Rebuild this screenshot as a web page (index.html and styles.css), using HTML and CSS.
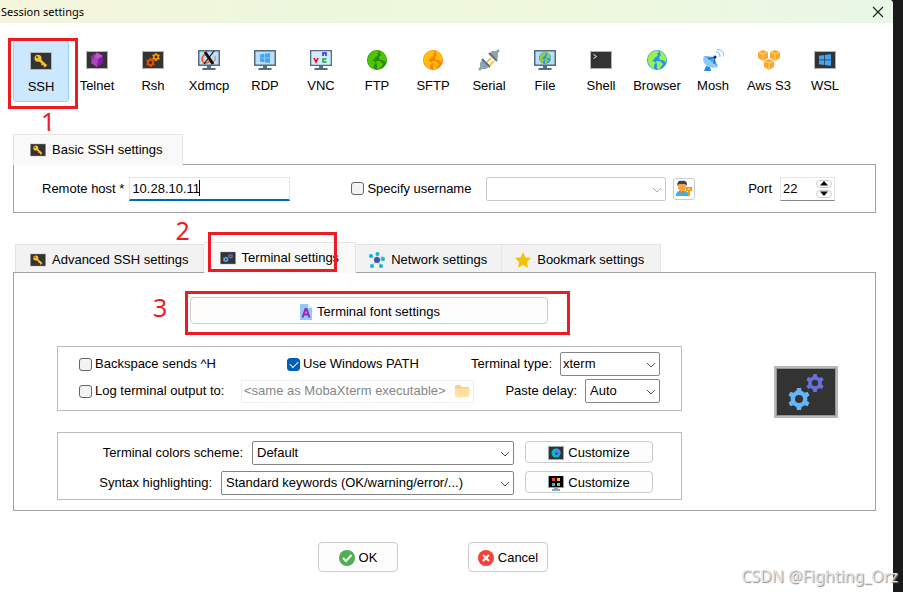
FILE: index.html
```html
<!DOCTYPE html>
<html lang="en">
<head>
<meta charset="utf-8">
<title>Session settings</title>
<link rel="stylesheet" href="styles.css">
</head>
<body>
<svg class="defs" aria-hidden="true">
  <symbol id="frame" viewBox="0 0 22 18">
    <rect width="22" height="18" fill="#b4b4b4"/><rect x="1" y="1" width="20" height="16" fill="#333"/>
  </symbol>
  <symbol id="key" viewBox="0 0 22 18">
    <use href="#frame"/>
    <path d="M8 6.500 16 14" stroke="#fbc02d" stroke-width="2.600"/>
    <path d="M11.600 13 14 10.800M14 15 16.400 12.800" stroke="#fbc02d" stroke-width="1.400"/>
    <circle cx="8" cy="6.300" r="3.500" fill="#fbc02d"/><circle cx="7" cy="5.300" r="1" fill="#333"/>
  </symbol>
  <symbol id="gear" viewBox="0 0 22 22">
    <circle cx="11" cy="11" r="6.200" fill="none" stroke="currentColor" stroke-width="4.400"/>
    <path d="M9 0h4l1 5H8zM9 22h4l1-5H8z" fill="currentColor"/>
    <path d="M9 0h4l1 5H8zM9 22h4l1-5H8z" fill="currentColor" transform="rotate(60 11 11)"/>
    <path d="M9 0h4l1 5H8zM9 22h4l1-5H8z" fill="currentColor" transform="rotate(120 11 11)"/>
  </symbol>
  <symbol id="blue-gears" viewBox="0 0 22 18">
    <use href="#frame"/>
    <use href="#gear" x="4" y="7" width="8" height="8" color="#64b5f6"/>
    <use href="#gear" x="11" y="3" width="7" height="7" color="#6573d8"/>
  </symbol>
  <symbol id="monitor" viewBox="0 0 22 21">
    <rect width="22" height="16" fill="#546e7a"/><rect x="1.500" y="1.500" width="19" height="13" fill="#bbdefb"/>
    <path d="M9 16h4v2h4.500v2h-13v-2H9z" fill="#546e7a"/>
  </symbol>
  <symbol id="windows" viewBox="0 0 12 12">
    <path d="M0 1.700 5.300 1v4.600H0zM6 .9 12 0v5.600H6zM0 6.300h5.300V11L0 10.300zM6 6.300h6V12l-6-.9z" fill="#42a5f5"/>
  </symbol>
  <symbol id="land" viewBox="0 0 20 20">
    <path d="M2 5C4 2 8 0 11 .5l1 2-2 1 1 2-3 2-1 2-2 .5 2 1.500L9 13l-2 2v4C2 17-1 11 2 5z" fill="currentColor"/>
    <path d="M13 1c4 1.500 6.500 5 6.500 9L18 12l-2-2-3 0-1-3 2-2-1-2zM9 11l4 0 3 3-2 3-2 2.500-2-1V15z" fill="currentColor"/>
  </symbol>
  <symbol id="chevron" viewBox="0 0 10 6"><path d="M1 1l4 4 4-4" fill="none" stroke="currentColor"/></symbol>
</svg>

<main class="dialog">
  <header class="titlebar">
    <h1>Session settings</h1>
    <button class="close" aria-label="Close"><svg width="12" height="12" viewBox="0 0 12 12"><path d="M1 1l10 10M11 1 1 11" stroke="#222" stroke-width="1.200"/></svg></button>
  </header>

  <nav class="types" aria-label="Session type">
    <button class="type active">
      <svg viewBox="0 0 22 22"><use href="#key" y="2" width="22" height="18"/></svg>SSH
      <span class="mark mark-type"></span><span class="digit digit-type">1</span>
    </button>
    <button class="type"><svg viewBox="0 0 22 22"><use href="#frame" y="2" width="22" height="18"/><path d="M11 3.500 17 7l-.5 7-5.500 4-6-4V7z" fill="#9c27b0"/><path d="M11 3.500 17 7l-4.500 3L8 8.500z" fill="#ba55cc"/><path d="M8 8.500 12.500 10 11 18l-6-4z" fill="#ab47bc"/><path d="M17 7l-4.500 3L11 18l5.500-4z" fill="#7b1fa2"/></svg>Telnet</button>
    <button class="type"><svg viewBox="0 0 22 22"><use href="#frame" y="2" width="22" height="18"/><use href="#gear" x="4" y="9" width="9" height="9" color="#e65100"/><use href="#gear" x="10" y="4" width="8" height="8" color="#ff9800"/></svg>Rsh</button>
    <button class="type"><svg viewBox="0 0 22 22"><use href="#monitor" y="1" width="22" height="21"/><path d="M9 5C4 6 3 10 5 13c2 2 5 1 7-1" fill="none" stroke="#ff5722" stroke-width="1.700"/><path d="M13 13c4 0 5-3 4-6" fill="none" stroke="#ff8a50" stroke-width="1.500"/><path d="M7 3l8 12" stroke="#111" stroke-width="3"/><path d="M16 2 6 15" stroke="#111" stroke-width="1.200"/></svg>Xdmcp</button>
    <button class="type"><svg viewBox="0 0 22 22"><use href="#monitor" y="1" width="22" height="21"/><use href="#windows" x="6" y="4" width="10" height="10"/></svg>RDP</button>
    <button class="type"><svg viewBox="0 0 22 22"><use href="#monitor" y="1" width="22" height="21"/><rect x="1.500" y="2.500" width="19" height="13" fill="#d4ebfc"/><path d="M4 9l2 4 2-4" fill="none" stroke="#f00" stroke-width="1.600"/><path d="M13 7V4h3v3" fill="none" stroke="#22f" stroke-width="1.500"/><path d="M16.500 10H13v3h3.500" fill="none" stroke="#0a3" stroke-width="1.500"/></svg>VNC</button>
    <button class="type"><svg viewBox="0 0 22 22"><circle cx="11" cy="11" r="10" fill="#2e8b0e"/><use href="#land" x="1" y="1" width="20" height="20" color="#4cc800"/></svg>FTP</button>
    <button class="type"><svg viewBox="0 0 22 22"><circle cx="11" cy="11" r="10" fill="#ff8000"/><use href="#land" x="1" y="1" width="20" height="20" color="#ffc107"/></svg>SFTP</button>
    <button class="type"><svg viewBox="0 0 22 22"><path d="M1 21l4-4M17 5l4-4" stroke="#90a4ae" stroke-width="2.500"/><path d="M9 13l4-4M12 16l4-4" stroke="#ffb300" stroke-width="1.600"/><path d="M4 11 11 18 8 20H4L2 18v-4zM12 4l7 7 1-3V4l-2-2h-4z" fill="#90a4ae"/><path d="M4 10l8 8M11 4l8 8" stroke="#607078" stroke-width="2"/></svg>Serial</button>
    <button class="type"><svg viewBox="0 0 22 22"><use href="#monitor" y="1" width="22" height="21"/><circle cx="11" cy="9" r="6" fill="#2196f3"/><use href="#land" x="5" y="3" width="12" height="12" color="#9ccc30"/></svg>File</button>
    <button class="type"><svg viewBox="0 0 22 22"><use href="#frame" y="2" width="22" height="18"/><path d="M3.500 5.500l3 2-3 2" fill="none" stroke="#eee"/></svg>Shell</button>
    <button class="type"><svg viewBox="0 0 22 22"><circle cx="11" cy="11" r="10" fill="#2196f3"/><use href="#land" x="1" y="1" width="20" height="20" color="#9cf050"/></svg>Browser</button>
    <button class="type"><svg viewBox="0 0 22 22"><path d="M4 17l-2 5h7l-1-4z" fill="#1e88e5"/><path d="M2 7c-3 6 3 14 14 11z" fill="#90caf9"/><path d="M2 7 16 18 12 8z" fill="#42a5f5"/><path d="M6 10l7-2-1 7" fill="none" stroke="#1565c0"/><circle cx="13" cy="8" r="1.500" fill="#0d2a70"/><path d="M14 3c3 0 4 2 4 5M15 .6c5 0 7 3 7 7" fill="none" stroke="#64b5f6"/></svg>Mosh</button>
    <button class="type"><svg viewBox="0 0 22 22"><g id="cube"><path d="M0 3l5-2 5 2v6l-5 3-5-3z" fill="#ffa726"/><path d="M0 3l5 2 5-2M5 5v7" fill="none" stroke="#ffe0b2" stroke-width=".8"/></g><use href="#cube" x="12"/><use href="#cube" x="6" y="9"/></svg>Aws S3</button>
    <button class="type"><svg viewBox="0 0 22 22"><use href="#frame" y="2" width="22" height="18"/><use href="#windows" x="5" y="5" width="12" height="12"/></svg>WSL</button>
  </nav>

  <section class="group basic">
    <div class="tabs"><button class="tab active"><svg class="tab-icon" viewBox="0 0 22 18"><use href="#key"/></svg>Basic SSH settings</button></div>
    <div class="panel basic-panel">
      <label for="host">Remote host *</label>
      <div class="host-field"><input id="host" type="text" value="10.28.10.11"><span class="caret"></span></div>
      <label class="check user-check"><input type="checkbox">Specify username</label>
      <div class="combo light user-combo"><select aria-label="Username"><option></option></select><svg><use href="#chevron"/></svg></div>
      <button class="user-button" aria-label="Manage users"><svg width="18" height="18" viewBox="0 0 18 18"><path d="M1 16c0-4 2-5 4-5h5c2 0 4 2 4 5z" fill="#29b6f6"/><path d="M5 10h4v2l-2 2-2-2z" fill="#f57c00"/><ellipse cx="7" cy="7" rx="4" ry="4.500" fill="#ffa040"/><path d="M2.500 6C1.500 1 5 0 7 1c4-1 6 2 4.500 5L10 4 4 4z" fill="#37474f"/><path d="M11 7h6v4h-2v5h-2v-5h-2z" fill="#ff9800"/><path d="M13 9h2" stroke="#fff"/></svg></button>
      <label class="port-label" for="port">Port</label>
      <div class="spinner"><input id="port" type="number" value="22"><div class="steps"><button aria-label="Increase port"><svg viewBox="0 0 8 5"><path d="M4 0l4 4.500H0z"/></svg></button><button aria-label="Decrease port"><svg viewBox="0 0 8 5"><path d="M0 .5h8L4 5z"/></svg></button></div></div>
    </div>
  </section>

  <section class="group">
    <div class="tabs more-tabs">
      <button class="tab"><svg class="tab-icon" viewBox="0 0 22 18"><use href="#key"/></svg>Advanced SSH settings</button>
      <button class="tab active"><svg class="tab-icon" viewBox="0 0 22 18"><use href="#blue-gears"/></svg>Terminal settings<span class="mark mark-tab"></span><span class="digit digit-tab">2</span></button>
      <button class="tab"><svg class="tab-icon" viewBox="0 0 16 16"><path d="M8 8 2 4M8 8V2M8 8l6-4M8 8l-5 6M8 8l4 6M8 8h6" stroke="#b0bec5"/><circle cx="8" cy="8" r="3" fill="#3f51b5"/><g fill="#00bcd4"><circle cx="2" cy="4" r="2"/><circle cx="8.500" cy="2" r="2"/><circle cx="14" cy="7" r="2"/><circle cx="3" cy="14" r="2"/><circle cx="12" cy="14" r="2"/></g></svg>Network settings</button>
      <button class="tab"><svg class="tab-icon" viewBox="0 0 16 16"><path d="M8 0l2.400 5.400 5.600.6-4.200 3.900L13 16l-5-3.200L3 16l1.200-6.100L0 6l5.600-.6z" fill="#f5c000"/></svg>Bookmark settings</button>
    </div>
    <div class="panel terminal-panel">
      <div class="options">
        <button class="push font-button"><svg width="12" height="16" viewBox="0 0 12 16"><path d="M0 0h8l4 4v12H0z" fill="#90caf9"/><path d="M8 0l4 4H8z" fill="#e1f5fe"/><path d="M2.500 13.500 5.500 5h1l3 8.500M4 10.500h4" fill="none" stroke="#9c27b0" stroke-width="2"/></svg>Terminal font settings<span class="mark mark-font"></span><span class="digit digit-font">3</span></button>
        <div class="box behaviour">
          <div class="row">
            <label class="check backspace"><input type="checkbox">Backspace sends ^H</label>
            <label class="check"><input type="checkbox" checked>Use Windows PATH</label>
            <label class="end" for="term">Terminal type:</label>
            <div class="combo tight term-combo"><select id="term"><option>xterm</option></select><svg><use href="#chevron"/></svg></div>
          </div>
          <div class="row">
            <label class="check log"><input type="checkbox">Log terminal output to:</label>
            <div class="log-field"><input type="text" disabled aria-label="Log folder" value="&lt;same as MobaXterm executable&gt;"><svg width="15" height="12" viewBox="0 0 15 12"><path d="M0 1.500Q0 0 1.500 0H5l1.500 2H13q1 0 1 1v8H0z" fill="#ffcc80"/><path d="M1 3.500h13q1 0 1 1l-1 6.500q0 1-1 1H1q-1 0-1-1V4.500q0-1 1-1z" fill="#ffe0a0"/></svg></div>
            <label class="end" for="paste">Paste delay:</label>
            <div class="combo paste-combo"><select id="paste"><option>Auto</option></select><svg><use href="#chevron"/></svg></div>
          </div>
        </div>
        <div class="box colours">
          <div class="row">
            <label for="scheme">Terminal colors scheme:</label>
            <div class="combo scheme-combo"><select id="scheme"><option>Default</option></select><svg><use href="#chevron"/></svg></div>
            <button class="push customize"><svg width="16" height="14" viewBox="0 0 16 14"><rect width="16" height="14" fill="#9aa"/><rect x="1" y="1" width="14" height="12" fill="#333"/><circle cx="8" cy="7" r="4.500" fill="#00bcd4"/><path d="M8 2.500A4.500 4.500 0 0 1 12.500 7L11 9 8 7z" fill="#448aff"/><path d="M8 6l2 2-1.500 1L7 8z" fill="#333"/></svg>Customize</button>
          </div>
          <div class="row">
            <label for="syntax">Syntax highlighting:</label>
            <div class="combo syntax-combo"><select id="syntax"><option>Standard keywords (OK/warning/error/...)</option></select><svg><use href="#chevron"/></svg></div>
            <button class="push customize"><svg width="16" height="16" viewBox="0 0 16 16"><rect y="1" width="16" height="12" fill="#90a4ae"/><rect x="1" y="1" width="14" height="11"/><path d="M6 13h4v1h2v2H4v-2h2z" fill="#90a4ae"/><path d="M4 3h3v3H4z" fill="#f44336"/><path d="M9 3h3v3H9z" fill="#ffc107"/><path d="M4 8h3v3H4z" fill="#29b6f6"/><path d="M9 8h3v3H9z" fill="#76d275"/></svg>Customize</button>
          </div>
        </div>
      </div>
      <svg class="preview" width="64" height="52" viewBox="0 0 64 52"><rect width="64" height="52" fill="#b8b8b8"/><rect x="2" y="2" width="60" height="48" fill="#969696"/><rect x="3" y="3" width="58" height="46" fill="#333"/><use href="#gear" x="14" y="22" width="22" height="22" color="#64b5f6"/><use href="#gear" x="32" y="8" width="18" height="18" color="#6573d8"/></svg>
    </div>
  </section>

  <footer class="actions">
    <button class="push"><svg width="16" height="16" viewBox="0 0 16 16"><circle cx="8" cy="8" r="8" fill="#4caf50"/><path d="M4 8l3 3 5.500-6" fill="none" stroke="#fff" stroke-width="2"/></svg>OK</button>
    <button class="push"><svg width="16" height="16" viewBox="0 0 16 16"><circle cx="8" cy="8" r="8" fill="#f44336"/><path d="M5 5l6 6M11 5l-6 6" stroke="#fff" stroke-width="2"/></svg>Cancel</button>
  </footer>
</main>
<div class="watermark">CSDN @Fighting_Orz</div>
</body>
</html>
```
FILE: styles.css
```css
* { box-sizing: border-box; }

body {
  margin: 0;
  min-height: 100vh;
  position: relative;
  padding-right: 10px;
  background: #1a1a1a;
  color: #000;
  font: 13px/16px "Liberation Sans", Arial, sans-serif;
  overflow: hidden;
}

button, input, select { font: inherit; color: inherit; margin: 0; }
button { padding: 0; border: 0; background: none; }
svg { flex: none; display: block; }
label { white-space: nowrap; }
.defs { position: absolute; width: 0; height: 0; }

.dialog {
  min-height: 100vh;
  background: #fff;
  border-top-right-radius: 4px;
  overflow: hidden;
}

.titlebar {
  display: flex;
  align-items: center;
  justify-content: space-between;
  height: 23px;
  padding: 0 9px 0 1px;
  background: linear-gradient(90deg, #f5f5dc, #ecf7dc 35%, #eff8dc 60%, #e8f7e6);
}
.titlebar h1 { margin: 0; font: 11px/22px "Noto Sans", sans-serif; }
.close { height: 16px; }

.types { display: flex; padding: 17px 13px 0; }
.type {
  position: relative;
  flex: 0 1 56px;
  min-width: 0;
  height: 62px;
  padding-top: 9px;
  display: flex;
  flex-direction: column;
  align-items: center;
  gap: 7px;
  white-space: nowrap;
}
.type > svg { width: 22px; height: 22px; }
.type.active {
  background: #cce8ff;
  border: 1px solid #99d1ff;
  border-radius: 3px;
}

.group { margin: 29px 17px 0 13px; }
.basic { margin-top: 32px; }
.tabs { display: flex; align-items: flex-end; }
.more-tabs { padding-left: 2px; }
.tab {
  position: relative;
  display: flex;
  align-items: center;
  gap: 6px;
  height: 28px;
  padding: 2px 14px 0;
  background: #f2f2f2;
  border: 1px solid #e4e4e4;
  border-bottom: 0;
  white-space: nowrap;
}
.tab + .tab { border-left: 0; padding-left: 13px; }
.tab:last-child { padding-right: 16px; }
.tab.active {
  height: 31px;
  margin-bottom: -1px;
  padding: 0 16px;
  background: #f9f9f9;
  z-index: 1;
}
.basic .tab.active { padding-right: 19px; }
.tab-icon { width: 16px; height: 16px; }

.panel { border: 1px solid #a0a0a0; }
.basic-panel {
  display: flex;
  align-items: center;
  height: 49px;
  padding: 0 40px 0 28px;
}
.host-field { position: relative; margin-left: 5px; flex: 0 1 161px; }
.host-field input {
  display: block;
  width: 100%;
  height: 24px;
  padding: 0 2px;
  border: 1px solid #e5e5e5;
  border-bottom: 2px solid #0067c0;
  outline: 0;
}
.caret { position: absolute; left: 70px; top: 3px; width: 1px; height: 16px; background: #000; }

.check { display: flex; align-items: center; gap: 3px; }
.check input {
  appearance: none;
  width: 13px;
  height: 13px;
  border: 1px solid #666;
  border-radius: 3px;
  background: #f3f3f3;
}
.check input:checked { border-color: #005fb8; background: #005fb8; }
.check input:checked::before {
  content: "";
  display: block;
  width: 7px;
  height: 4px;
  margin: 2px;
  border: solid #fff;
  border-width: 0 0 1px 1px;
  transform: rotate(-45deg);
}
.user-check { margin-left: 61px; }

.combo { position: relative; height: 24px; }
.combo select {
  appearance: none;
  display: block;
  width: 100%;
  height: 24px;
  padding: 0 18px 0 4px;
  border: 1px solid #858585;
  border-radius: 2px;
  background: #fff;
}
.combo.tight select { padding-left: 2px; }
.combo svg { position: absolute; right: 4px; top: 10px; width: 10px; height: 6px; color: #555; pointer-events: none; }
.combo.light select { border-color: #c8c8c8; }
.combo.light svg { color: #aaa; }
.user-combo { flex: 0 1 180px; margin-left: 15px; }
.user-button {
  display: grid;
  place-items: center;
  width: 22px;
  height: 22px;
  margin-left: 7px;
  border: 1px solid #ccc;
  border-radius: 3px;
}
.port-label { margin-left: auto; }
.spinner {
  display: flex;
  align-items: center;
  width: 55px;
  height: 24px;
  margin-left: 8px;
  padding-right: 2px;
  border: 1px solid #e5e5e5;
  border-bottom-color: #868686;
}
.spinner input { flex: 1; min-width: 0; height: 20px; padding: 0 2px; border: 0; appearance: textfield; outline: 0; }
.spinner input::-webkit-inner-spin-button { appearance: none; }
.steps { display: grid; gap: 2px; }
.steps button {
  display: grid;
  place-items: center;
  width: 16px;
  height: 8px;
  border: 1px solid #ccc;
  border-radius: 4px;
}
.steps svg { width: 8px; height: 5px; }

.terminal-panel {
  display: flex;
  justify-content: space-between;
  align-items: flex-start;
  padding: 24px 37px 10px 43px;
}
.options { flex: 0 1 625px; }
.push {
  position: relative;
  display: flex;
  align-items: center;
  justify-content: center;
  gap: 5px;
  padding-top: 1px;
  background: #fdfdfd;
  border: 1px solid #ccc;
  border-radius: 4px;
  white-space: nowrap;
}
.font-button { width: 358px; height: 27px; margin-left: 133px; padding: 2px 0 0 2px; }

.box { border: 1px solid #bcbcbc; }
.row { display: flex; align-items: center; height: 24px; }
.behaviour { display: grid; gap: 3px; margin-top: 22px; padding: 5px 21px 7px; }
.backspace { width: 208px; }
.log { width: 162px; }
.end { margin-left: auto; }
.term-combo { width: 100px; margin-left: 8px; }
.paste-combo { width: 75px; margin-left: 8px; }
.log-field {
  display: flex;
  align-items: center;
  width: 233px;
  height: 23px;
  padding: 0 3px 0 2px;
  border: 1px solid #eee;
}
.log-field input { flex: 1; min-width: 0; padding: 0; border: 0; background: none; color: #868686; }

.colours { display: grid; gap: 6px; margin-top: 21px; padding: 8px 28px 4px; }
.colours .row { justify-content: flex-end; }
.scheme-combo { flex: 0 1 262px; margin-left: 9px; }
.syntax-combo { flex: 0 1 293px; margin-left: 9px; }
.customize { width: 128px; height: 22px; margin-left: 11px; padding-top: 2px; align-self: flex-start; gap: 4px; }
.preview { margin-top: 69px; }

.actions { display: flex; justify-content: center; gap: 70px; margin-top: 31px; padding-right: 27px; }
.actions .push { width: 80px; height: 30px; gap: 4px; }

/* Tutorial callouts over the numbered steps */
.mark { position: absolute; border: 3px solid #ed1c24; pointer-events: none; }
.digit { position: absolute; color: #ed1c24; font: 25px/26px "Noto Sans", sans-serif; }
.mark-type { left: -6px; top: -3px; width: 70px; height: 71px; }
.digit-type { left: 27px; top: 67px; }
.mark-tab { left: 4px; top: -11px; width: 129px; height: 40px; }
.digit-tab { left: -28px; top: -26px; }
.mark-font { left: -6px; top: -7px; width: 385px; height: 44px; }
.digit-font { left: -38px; top: -4px; }

.watermark {
  position: absolute;
  right: 5px;
  bottom: 5px;
  color: #e4e4e4;
  font: 16px/22px "Noto Sans", sans-serif;
  text-shadow: 1px 1px 1px #888;
}
```
